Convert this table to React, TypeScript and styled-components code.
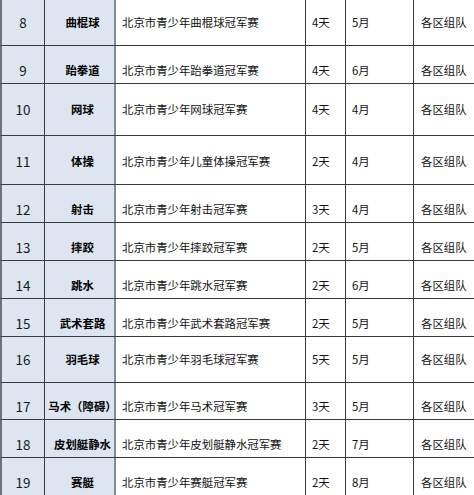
import styled, { createGlobalStyle } from "styled-components";

const GlobalStyle = createGlobalStyle`
  * { box-sizing: border-box; }
  html, body {
    margin: 0;
    padding: 0;
    background: #ffffff;
    overflow: hidden;
  }
  body {
    font-family: "Noto Sans CJK SC", "Noto Sans", sans-serif;
    color: #111;
  }
`;

const Sheet = styled.div`
  width: 474px;
  height: 495px;
  overflow: hidden;
  display: flex;
  flex-direction: column;
`;

const Row = styled.div<{ $h: number; $lift: number }>`
  display: grid;
  grid-template-columns: 43px 71px 190px 40px 68px 80px;
  height: ${p => p.$h}px;
  flex-shrink: 0;
  border-left: 2px solid #6e7178;
  border-bottom: 1px solid #3a3a3a;

  & > div {
    padding-top: ${p => p.$lift}px;
  }
`;

const Cell = styled.div`
  display: flex;
  align-items: center;
  border-right: 1px solid #3a3a3a;
  font-size: 11.4px;
  line-height: 1;
  white-space: nowrap;
  padding-left: 6px;
`;

const NumCell = styled(Cell)`
  background: #dde5f0;
  justify-content: center;
  padding-left: 0;
  font-size: 13.4px;
  color: #1a1a1a;
`;

const SportCell = styled(Cell)`
  background: #dde5f0;
  justify-content: center;
  font-weight: 700;
  border-right: 2px solid #858b95;
  color: #000;
`;

const OrgCell = styled(Cell)`
  border-right: none;
  padding-left: 7px;
`;

interface Event {
  no: number;
  sport: string;
  name: string;
  days: string;
  month: string;
  h: number;
  lift: number;
}

const events: Event[] = [
  { no: 8, sport: "曲棍球", name: "北京市青少年曲棍球冠军赛", days: "4天", month: "5月", h: 46, lift: 0 },
  { no: 9, sport: "跆拳道", name: "北京市青少年跆拳道冠军赛", days: "4天", month: "6月", h: 38, lift: 12 },
  { no: 10, sport: "网球", name: "北京市青少年网球冠军赛", days: "4天", month: "4月", h: 52, lift: 0 },
  { no: 11, sport: "体操", name: "北京市青少年儿童体操冠军赛", days: "2天", month: "4月", h: 49, lift: 4 },
  { no: 12, sport: "射击", name: "北京市青少年射击冠军赛", days: "3天", month: "4月", h: 38, lift: 12 },
  { no: 13, sport: "摔跤", name: "北京市青少年摔跤冠军赛", days: "2天", month: "5月", h: 38, lift: 12 },
  { no: 14, sport: "跳水", name: "北京市青少年跳水冠军赛", days: "2天", month: "6月", h: 38, lift: 12 },
  { no: 15, sport: "武术套路", name: "北京市青少年武术套路冠军赛", days: "2天", month: "5月", h: 38, lift: 12 },
  { no: 16, sport: "羽毛球", name: "北京市青少年羽毛球冠军赛", days: "5天", month: "5月", h: 46, lift: 0 },
  { no: 17, sport: "马术（障碍）", name: "北京市青少年马术冠军赛", days: "3天", month: "5月", h: 37, lift: 12 },
  { no: 18, sport: "皮划艇静水", name: "北京市青少年皮划艇静水冠军赛", days: "2天", month: "7月", h: 38, lift: 12 },
  { no: 19, sport: "赛艇", name: "北京市青少年赛艇冠军赛", days: "2天", month: "8月", h: 38, lift: 12 },
];

export default function App() {
  return (
    <>
      <GlobalStyle />
      <Sheet>
        {events.map(ev => (
          <Row key={ev.no} $h={ev.h} $lift={ev.lift}>
            <NumCell>{ev.no}</NumCell>
            <SportCell>{ev.sport}</SportCell>
            <Cell>{ev.name}</Cell>
            <Cell>{ev.days}</Cell>
            <Cell>{ev.month}</Cell>
            <OrgCell>各区组队</OrgCell>
          </Row>
        ))}
      </Sheet>
    </>
  );
}
